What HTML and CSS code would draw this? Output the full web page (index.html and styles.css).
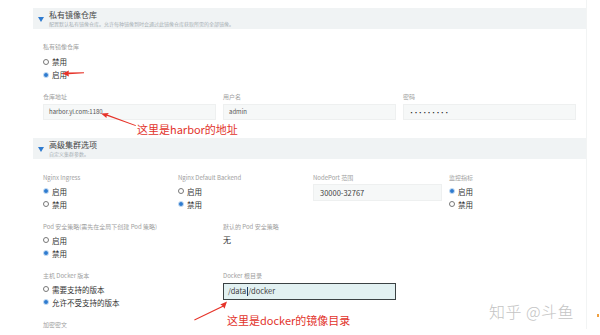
FILE: index.html
```html
<!DOCTYPE html>
<html>
<head>
<meta charset="utf-8">
<link rel="stylesheet" href="styles.css">
</head>
<body>
<div class="page">
  <div class="bar">
    <span class="tri"></span>
    <div class="bar-text">
      <div class="bar-title">私有镜像仓库</div>
      <div class="bar-sub">配置默认私有镜像仓库。允许每种镜像到时会通过此镜像仓库获取所需的全部镜像。</div>
    </div>
  </div>
  <div class="sec1">
    <div class="label">私有镜像仓库</div>
    <div class="radio"><span class="dot"></span>禁用</div>
    <div class="radio"><span class="dot on"></span>启用</div>
    <div class="grid3 mt12">
      <div class="field">
        <div class="label">仓库地址</div>
        <div class="input">harbor.yl.com:1180</div>
      </div>
      <div class="field">
        <div class="label">用户名</div>
        <div class="input">admin</div>
      </div>
      <div class="field">
        <div class="label">密码</div>
        <div class="input pw">•••••••••</div>
      </div>
    </div>
  </div>
  <div class="bar">
    <span class="tri"></span>
    <div class="bar-text">
      <div class="bar-title">高级集群选项</div>
      <div class="bar-sub">自定义集群参数。</div>
    </div>
  </div>
  <div class="sec2">
    <div class="grid4">
      <div class="field">
        <div class="label">Nginx Ingress</div>
        <div class="radio"><span class="dot on"></span>启用</div>
        <div class="radio"><span class="dot"></span>禁用</div>
      </div>
      <div class="field">
        <div class="label">Nginx Default Backend</div>
        <div class="radio"><span class="dot"></span>启用</div>
        <div class="radio"><span class="dot on"></span>禁用</div>
      </div>
      <div class="field">
        <div class="label">NodePort 范围</div>
        <div class="input tall">30000-32767</div>
      </div>
      <div class="field">
        <div class="label">监控指标</div>
        <div class="radio"><span class="dot on"></span>启用</div>
        <div class="radio"><span class="dot"></span>禁用</div>
      </div>
    </div>
    <div class="grid3 row">
      <div class="field">
        <div class="label">Pod 安全策略(需先在全局下创建 Pod 策略)</div>
        <div class="radio"><span class="dot"></span>启用</div>
        <div class="radio"><span class="dot on"></span>禁用</div>
      </div>
      <div class="field">
        <div class="label">默认的 Pod 安全策略</div>
        <div class="value">无</div>
      </div>
    </div>
    <div class="grid3 row">
      <div class="field">
        <div class="label">主机 Docker 版本</div>
        <div class="radio"><span class="dot"></span>需要支持的版本</div>
        <div class="radio"><span class="dot on"></span>允许不受支持的版本</div>
      </div>
      <div class="field">
        <div class="label">Docker 根目录</div>
        <div class="input focus">/data<span class="caret"></span>/docker</div>
      </div>
    </div>
    <div class="label row">加密密文</div>
  </div>
</div>

<svg class="arrows" width="600" height="335" viewBox="0 0 600 335">
  <polygon points="62,73.5 69,70.5 68.5,72.6 84,72.2 84,73.2 68.5,74.2 69,76.5" fill="#e63329"/>
  <polygon points="101,113.5 109,113 107.3,114.6 136,125.2 135.6,126 106.7,115.8 106.5,118" fill="#e63329"/>
  <polygon points="227,301.5 224.5,308.8 223.2,306.7 194.6,320.4 194.2,319.6 222.6,305.8 220.2,304.5" fill="#e63329"/>
</svg>
<div class="note note1">这里是harbor的地址</div>
<div class="note note2">这里是docker的镜像目录</div>
<div class="watermark">知乎 @斗鱼</div>
<div class="edge-mark"></div>
</body>
</html>
```
FILE: styles.css
```css
html, body {
  margin: 0;
  padding: 0;
  background: #ffffff;
}
body {
  width: 600px;
  height: 335px;
  overflow: hidden;
  position: relative;
  font-family: "Noto Sans CJK SC", "Noto Sans", sans-serif;
  color: #333;
}
.page {
  margin-left: 33px;
  width: 554px;
  padding-top: 8px;
  border-right: 1px solid #f2f4f4;
  min-height: 327px;
  box-sizing: border-box;
}
.bar {
  height: 21px;
  background: #f0f3f4;
  display: flex;
  align-items: center;
  padding-left: 5px;
}
.tri {
  width: 0;
  height: 0;
  border-left: 3px solid transparent;
  border-right: 3px solid transparent;
  border-top: 5px solid #2e7bd0;
  margin-right: 5px;
  margin-top: 1px;
}
.bar-title {
  font-size: 8px;
  line-height: 10px;
  color: #444;
}
.bar-sub {
  font-size: 5px;
  line-height: 7px;
  color: #a8b0b4;
}
.sec1 {
  padding: 14px 10px 18px 10px;
}
.sec2 {
  padding: 15px 10px 0 10px;
}
.label {
  font-size: 6px;
  line-height: 8px;
  color: #a0a0a0;
  white-space: nowrap;
}
.radio {
  display: flex;
  align-items: center;
  font-size: 7.5px;
  line-height: 13px;
  height: 13px;
  color: #333;
  white-space: nowrap;
}
.label + .radio {
  margin-top: 2.5px;
}
.sec1 > .label + .radio {
  margin-top: 4px;
}
.dot {
  width: 4px;
  height: 4px;
  border-radius: 50%;
  border: 0.7px solid #777;
  margin-right: 3px;
  background: #fff;
  flex: none;
}
.dot.on {
  border-color: #c7ddf3;
  background: #2e7bd0;
}
.grid3 {
  display: grid;
  grid-template-columns: 173px 173px 173px;
  column-gap: 7px;
}
.grid4 {
  display: grid;
  grid-template-columns: 128px 128px 129px 128px;
  column-gap: 7px;
}
.mt12 {
  margin-top: 12px;
}
.row {
  margin-top: 12.5px;
}
.input {
  margin-top: 3px;
  height: 16px;
  box-sizing: border-box;
  background: #f6f8f8;
  border: 1px solid #eef0f0;
  font-size: 6px;
  line-height: 14px;
  padding-left: 5px;
  color: #555;
  white-space: nowrap;
}
.input.pw {
  font-size: 5px;
  letter-spacing: -0.6px;
  color: #111;
  font-weight: 700;
}
.input.tall {
  margin-top: 2px;
  height: 17px;
  line-height: 15px;
  font-size: 7.5px;
  padding-left: 6px;
  color: #444;
}
.input.focus {
  margin-top: 3px;
  height: 17px;
  line-height: 14px;
  background: #e2f1f2;
  border: 1.5px solid #3b4244;
  font-size: 7.5px;
  color: #444;
  padding-left: 4px;
}
.caret {
  display: inline-block;
  width: 1px;
  height: 9px;
  background: #1a3a66;
  vertical-align: middle;
  margin: 0 0.5px;
}
.value {
  margin-top: 3px;
  font-size: 8px;
  line-height: 12px;
  color: #333;
}
.arrows {
  position: absolute;
  left: 0;
  top: 0;
}
.note {
  position: absolute;
  font-size: 11px;
  line-height: 14px;
  color: #e2332b;
  white-space: nowrap;
}
.note1 {
  left: 137px;
  top: 122px;
}
.note2 {
  left: 227px;
  top: 313px;
}
.watermark {
  position: absolute;
  left: 489px;
  top: 301px;
  font-size: 16px;
  line-height: 20px;
  color: #c4c4c4;
  font-weight: 300;
  letter-spacing: 0.5px;
  white-space: nowrap;
}
.edge-mark {
  position: absolute;
  left: 597px;
  top: 314px;
  width: 2px;
  height: 3px;
  background: #f0a040;
}
```
